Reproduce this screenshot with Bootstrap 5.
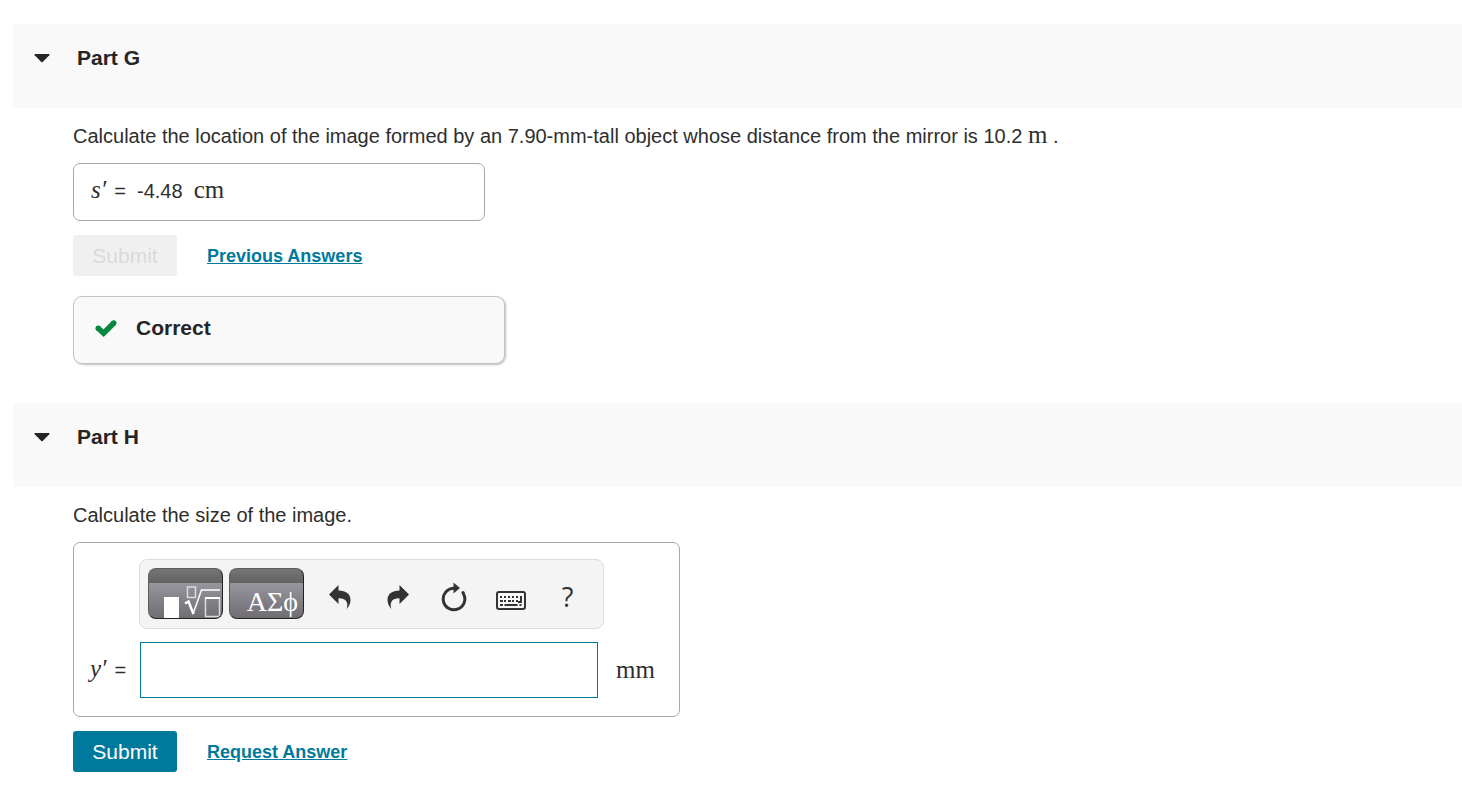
<!DOCTYPE html>
<html lang="en">
<head>
<meta charset="utf-8">
<meta name="viewport" content="width=device-width, initial-scale=1">
<title>Mirror problem: Parts G and H</title>
<link href="https://cdn.jsdelivr.net/npm/bootstrap@5.3.0/dist/css/bootstrap.min.css" rel="stylesheet">
<style>
  body { font-family: "Liberation Sans", Arial, sans-serif; font-size: 20px; line-height: 24px; color: #2e2e2e; background: #fff; }
  .problem { padding: 24px 0 24px 13px; }
  .part + .part { margin-top: 39px; }
  .part-head { background: #f9f9f9; height: 84px; padding: 22px 21px; color: #252525; }
  .part-head h2, .feedback h3 { font-size: 21px; line-height: 24px; font-weight: 700; }
  .part-toggle { gap: 27px; line-height: 24px; }
  .part-body { padding: 16px 16px 0 60px; }
  .prompt { margin-bottom: 15px; }
  .unit, .var { font-family: "Liberation Serif", "Times New Roman", serif; font-size: 25px; line-height: 20px; }
  .var { font-style: italic; }
  .answer-box { border: 1px solid #a8a8a8; border-radius: 7px; max-width: 100%; margin-bottom: 14px; }
  .given { width: 412px; height: 58px; padding: 0 17px 2px; }
  .editor { width: 607px; padding: 16px 16px 18px; display: grid; grid-template-columns: 50px minmax(0, 1fr) 65px; row-gap: 13px; align-items: center; }
  .toolbar { grid-column: 2 / 4; width: 465px; max-width: 100%; height: 70px; margin-left: -1px; padding: 8px; gap: 6px; background: #f4f4f4; border: 1px solid #dcdcdc; border-radius: 8px; }
  .palette { width: 75px; height: 51px; padding: 0; border: 1px solid #5d5d5f; border-right-color: #222; border-bottom-color: #222; border-radius: 8px; overflow: hidden; background: linear-gradient(#757575, #626262 14px, #97959d 14px, #706e73); color: #fff; }
  .palette:hover { color: #fff; }
  .greek { font-family: "Liberation Serif", serif; font-size: 28px; line-height: 30px; padding: 16px 5px 0 0; text-align: right; }
  .tool { width: 51px; height: 51px; padding: 6px 0 0; border: 0; color: #333; }
  .tool-first { margin-left: 4px; }
  .help { font-family: "Open Sans", sans-serif; font-size: 27px; line-height: 45px; }
  .answer-input { height: 56px; border: 1px solid #00799a; border-radius: 0; box-shadow: none; font-size: 20px; }
  .answer-unit { padding-left: 18px; }
  .actions { gap: 30px; }
  .submit { width: 104px; height: 41px; padding: 0; font-size: 21px; border: 0; border-radius: 3px; background: #007a9c; color: #fff; }
  .submit:hover { background: #00637f; color: #fff; }
  .submit:disabled { background: #f0f0f0; color: #dadada; opacity: 1; }
  .action-link { font-size: 18px; font-weight: 700; color: #007a9c; }
  .feedback { width: 432px; max-width: 100%; height: 68px; margin-top: 20px; padding: 19px 21px; gap: 19px; background: #f9f9f9; border: 1px solid #c4c4c4; border-radius: 9px; box-shadow: 1px 1px 2px rgba(0,0,0,.25); color: #252525; }
</style>
</head>
<body>
<main class="problem">
  <section class="part">
    <header class="part-head">
      <button type="button" class="part-toggle btn border-0 p-0 d-flex align-items-center text-reset" aria-expanded="true" data-bs-toggle="collapse" data-bs-target="#part-g">
        <svg width="16" height="10" viewBox="0 0 16 10" fill="currentColor" aria-hidden="true"><path d="M1 1h14q1 .4.3 1.300L8.700 9Q8 9.600 7.300 9L.7 2.300Q0 1.400 1 1z"/></svg>
        <h2 class="m-0">Part G</h2>
      </button>
    </header>
    <div id="part-g" class="part-body collapse show">
      <p class="prompt">Calculate the location of the image formed by an 7.90-mm-tall object whose distance from the mirror is 10.2 <span class="unit">m</span> .</p>
      <div class="answer-box given d-flex align-items-center">
        <span><span class="var me-2">s′</span>=&nbsp; -4.48 &nbsp;<span class="unit">cm</span></span>
      </div>
      <div class="actions d-flex align-items-center">
        <button type="button" class="btn submit" disabled>Submit</button>
        <a href="#" class="action-link">Previous Answers</a>
      </div>
      <div class="feedback d-flex align-items-start" role="status">
        <svg width="22" height="24" viewBox="0 0 22 24" aria-hidden="true"><path d="M3.200 12.200 8.600 17.200 18.800 7" fill="none" stroke="#07873f" stroke-width="5.500"/><circle cx="3.200" cy="12.200" r="2.700" fill="#07873f"/><circle cx="18.800" cy="7" r="2.700" fill="#07873f"/></svg>
        <h3 class="m-0">Correct</h3>
      </div>
    </div>
  </section>

  <section class="part">
    <header class="part-head">
      <button type="button" class="part-toggle btn border-0 p-0 d-flex align-items-center text-reset" aria-expanded="true" data-bs-toggle="collapse" data-bs-target="#part-h">
        <svg width="16" height="10" viewBox="0 0 16 10" fill="currentColor" aria-hidden="true"><path d="M1 1h14q1 .4.3 1.300L8.700 9Q8 9.600 7.300 9L.7 2.300Q0 1.400 1 1z"/></svg>
        <h2 class="m-0">Part H</h2>
      </button>
    </header>
    <div id="part-h" class="part-body collapse show">
      <p class="prompt">Calculate the size of the image.</p>
      <div class="answer-box editor">
        <div class="toolbar d-flex" role="toolbar" aria-label="Equation tools">
          <button type="button" class="btn palette" aria-label="Templates">
            <svg class="d-block" width="73" height="49" viewBox="0 0 73 49" fill="none" stroke="#fff" aria-hidden="true">
              <path d="M15 28h15v21H15z" fill="#fff" stroke="none"/>
              <path d="M38.500 18h8v10.500h-8z" stroke="#ddd" stroke-width="1.500"/>
              <path d="M36 34.500l3.500-2 5 12.500" stroke-width="2.500"/>
              <path d="M44 45 52.500 21H71" stroke-width="1.500"/>
              <path d="M56.500 29v18.500h14V29z" stroke="#ddd" stroke-width="1.500"/><path d="M56 29h15" stroke-width="2"/>
            </svg>
          </button>
          <button type="button" class="btn palette greek" aria-label="Greek letters">ΑΣϕ</button>
          <button type="button" class="btn tool tool-first" aria-label="Undo">
            <svg width="22" height="26" viewBox="0 0 22 26" fill="currentColor" aria-hidden="true"><path d="M0 10.500 9.500 1v5.500C17 6.500 21.500 10 21.500 16c0 4-2 7-4 9 .8-2.500 1.200-4.500.4-6.500-1-3-4-4.200-8.400-4.200V20z"/></svg>
          </button>
          <button type="button" class="btn tool" aria-label="Redo">
            <svg width="24" height="26" viewBox="-2 0 24 26" fill="currentColor" aria-hidden="true"><path d="M22 10.500 12.500 1v5.500C5 6.500.5 10 .5 16c0 4 2 7 4 9-.8-2.500-1.200-4.500-.4-6.500 1-3 4-4.200 8.400-4.200V20z"/></svg>
          </button>
          <button type="button" class="btn tool" aria-label="Reset">
            <svg width="26" height="30" viewBox="0 0 26 30" aria-hidden="true"><path d="M13 6.200A10.800 10.800 0 1 0 22 11" fill="none" stroke="currentColor" stroke-width="3"/><path d="M12.500.5 19 6l-6.500 5.500z" fill="currentColor"/><circle cx="22" cy="10.500" r="1.600" fill="currentColor"/></svg>
          </button>
          <button type="button" class="btn tool" aria-label="Keyboard">
            <svg width="30" height="30" viewBox="0 0 30 30" aria-hidden="true"><rect x="1" y="10" width="28" height="17" rx="2" fill="#f7f7f7" stroke="currentColor" stroke-width="2"/><g fill="none" stroke="currentColor" stroke-width="2"><path d="M4 15h19" stroke-dasharray="2 2"/><path d="M4 19h18" stroke-dasharray="3 1 2 2"/><path d="M4 23h3M8.500 23h13M23.500 23h2M25 14v6h-3"/></g></svg>
          </button>
          <button type="button" class="btn tool help" aria-label="Help">?</button>
        </div>
        <label for="size-answer" class="text-nowrap"><span class="var me-2">y′</span>=</label>
        <input id="size-answer" type="text" class="form-control answer-input" autocomplete="off">
        <span class="unit answer-unit">mm</span>
      </div>
      <div class="actions d-flex align-items-center">
        <button type="button" class="btn submit">Submit</button>
        <a href="#" class="action-link">Request Answer</a>
      </div>
    </div>
  </section>
</main>
<script src="https://cdn.jsdelivr.net/npm/bootstrap@5.3.0/dist/js/bootstrap.bundle.min.js"></script>
</body>
</html>
